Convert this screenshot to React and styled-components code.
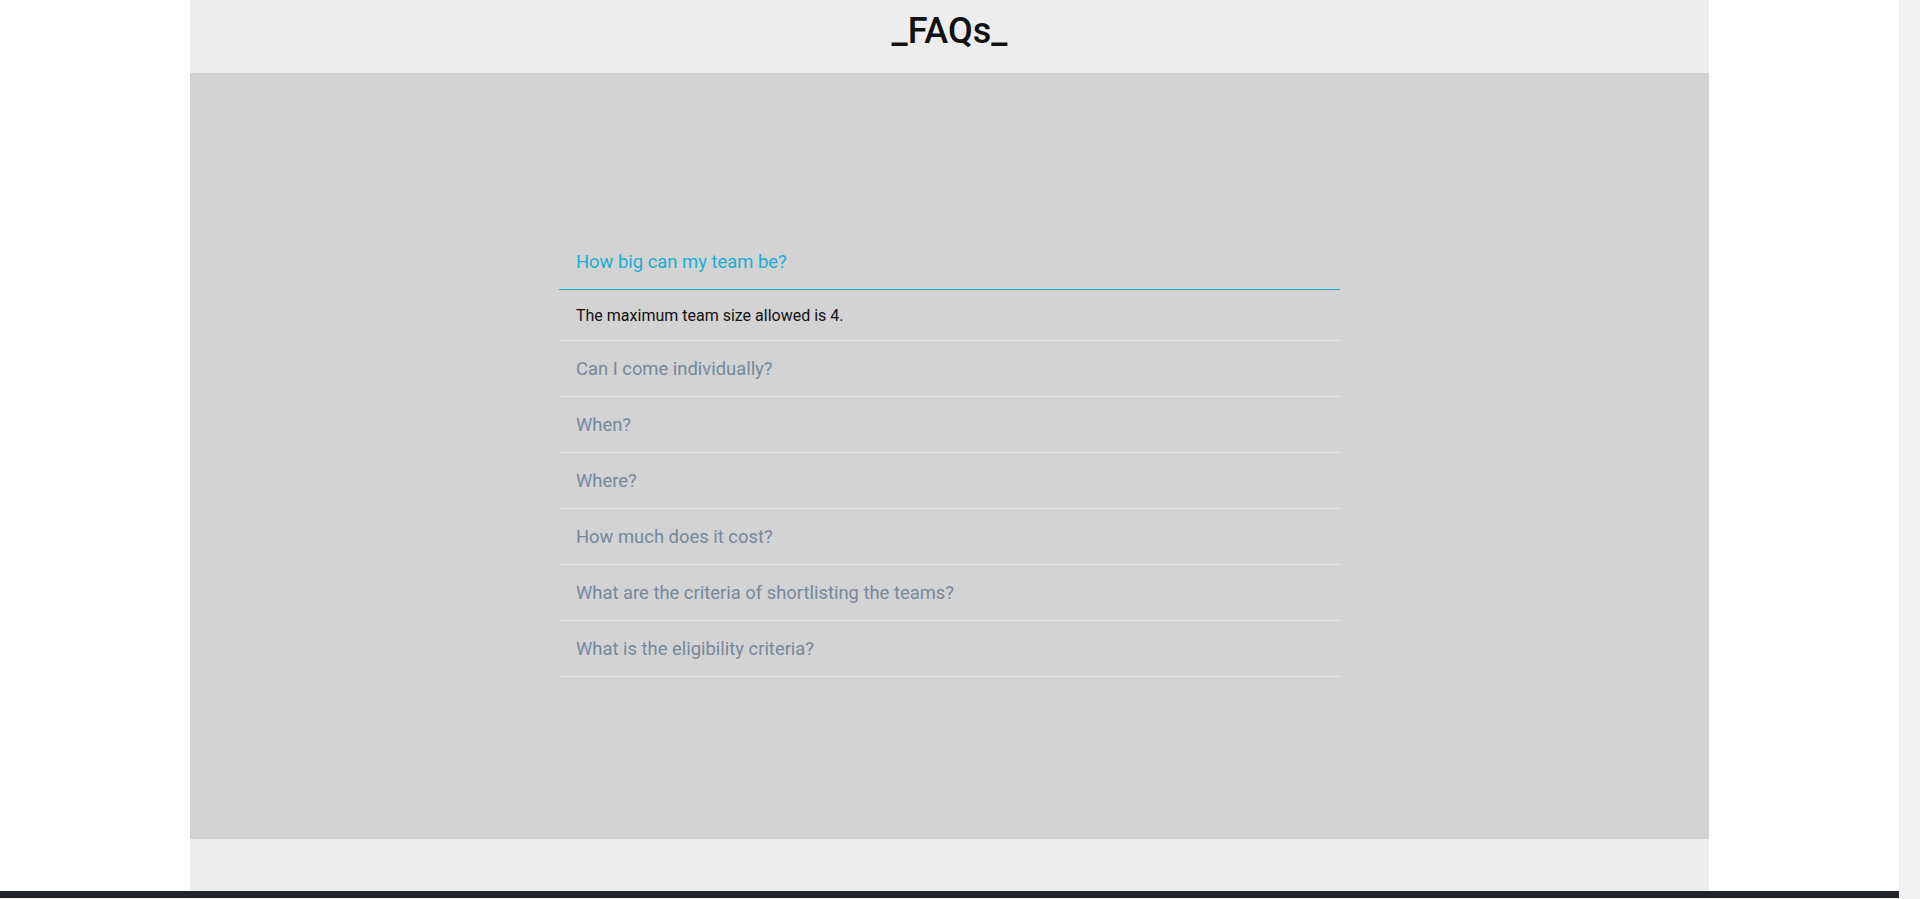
import React, { useState } from "react";
import styled, { createGlobalStyle } from "styled-components";

const faqs = [
  { q: "How big can my team be?", a: "The maximum team size allowed is 4." },
  { q: "Can I come individually?", a: "Yes, you can participate on your own." },
  { q: "When?", a: "The dates will be announced soon." },
  { q: "Where?", a: "The venue will be announced soon." },
  { q: "How much does it cost?", a: "Participation is free of cost." },
  {
    q: "What are the criteria of shortlisting the teams?",
    a: "Teams are shortlisted on the basis of their idea submission."
  },
  {
    q: "What is the eligibility criteria?",
    a: "Any student enrolled in a college can participate."
  }
];

export default function App() {
  const [open, setOpen] = useState(0);

  return (
    <>
      <GlobalStyle />
      <Page>
        <Heading>
          <h2>_FAQs_</h2>
        </Heading>
        <FaqSection>
          <FaqList>
            {faqs.map((item, i) => (
              <FaqItem key={item.q}>
                <Question
                  $active={open === i}
                  onClick={() => setOpen(open === i ? -1 : i)}
                >
                  {item.q}
                </Question>
                {open === i && <Answer>{item.a}</Answer>}
              </FaqItem>
            ))}
          </FaqList>
        </FaqSection>
        <Spacer />
      </Page>
      <Footer />
    </>
  );
}

// the right gutter stands in for the browser's scrollbar track
const GlobalStyle = createGlobalStyle`
  html {
    background: #f1f1f1;
  }

  body {
    margin: 0 21px 0 0;
    background: #fff;
    font-family: Roboto, "Liberation Sans", sans-serif;
  }
`;

const Page = styled.main`
  width: 80%;
  margin: 0 auto;
  background: #ededed;
`;

const Heading = styled.div`
  height: 73px;
  box-sizing: border-box;
  padding-bottom: 12px;
  display: flex;
  align-items: center;
  justify-content: center;

  h2 {
    margin: 0;
    font-size: 36px;
    font-weight: 500;
    color: #111;
  }
`;

const FaqSection = styled.section`
  background: #d3d3d3;
  padding: 161px 0 162px;
`;

const FaqList = styled.div`
  width: 781px;
  margin: 0 auto;
`;

const FaqItem = styled.div`
  border-bottom: 1px solid #e4e4e4;
`;

const Question = styled.div`
  height: 55px;
  padding: 0 17px;
  display: flex;
  align-items: center;
  font-size: 18.4px;
  color: ${p => (p.$active ? "#1badd1" : "#778899")};
  border-bottom: ${p => (p.$active ? "1px solid #1badd1" : "none")};
  cursor: pointer;
`;

const Answer = styled.div`
  height: 50px;
  padding: 0 17px;
  display: flex;
  align-items: center;
  font-size: 16px;
  color: #111;
`;

const Spacer = styled.div`
  height: 52px;
`;

const Footer = styled.footer`
  height: 7px;
  background: #212529;
`;
